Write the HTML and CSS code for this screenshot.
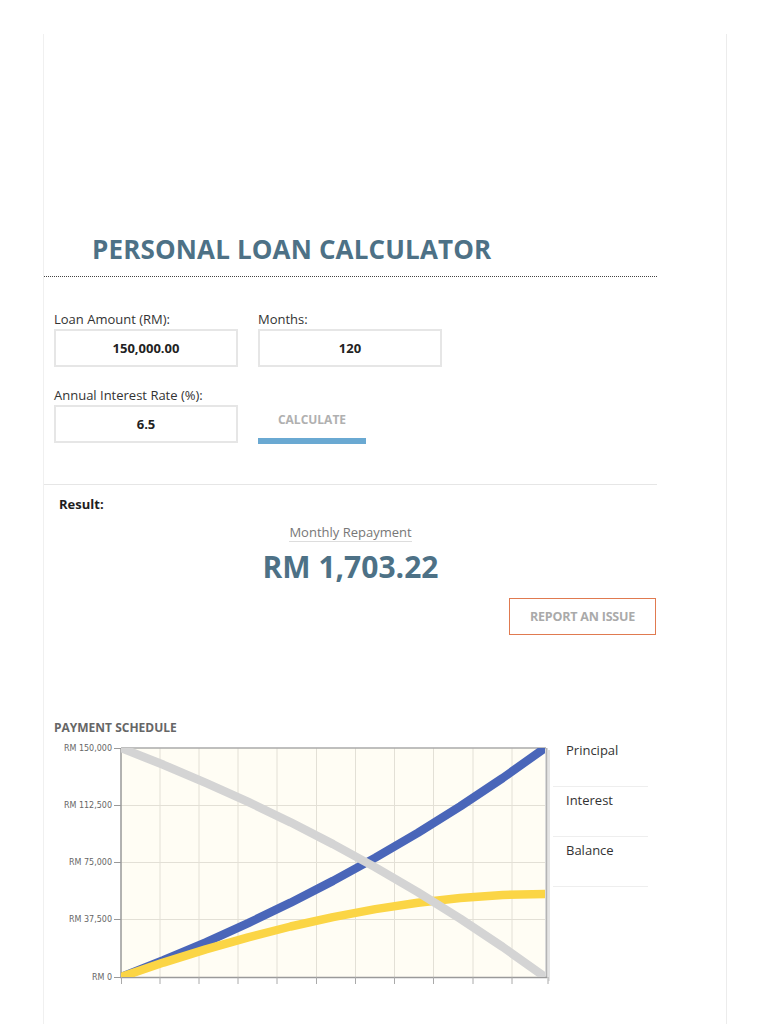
FILE: index.html
```html
<!DOCTYPE html>
<html lang="en">
<head>
<meta charset="utf-8">
<title>Personal Loan Calculator</title>
<link rel="stylesheet" href="styles.css">
</head>
<body>
<div class="page">
  <div class="main">
    <h1 class="title">PERSONAL LOAN CALCULATOR</h1>

    <form class="form">
      <div class="field">
        <label class="label">Loan Amount (RM):</label>
        <input class="input" type="text" value="150,000.00">
      </div>
      <div class="field">
        <label class="label">Months:</label>
        <input class="input" type="text" value="120">
      </div>
      <div class="field">
        <label class="label">Annual Interest Rate (%):</label>
        <input class="input" type="text" value="6.5">
      </div>
      <div class="field field-btn">
        <button class="calc" type="button">CALCULATE</button>
      </div>
    </form>

    <section class="result">
      <div class="result-label">Result:</div>
      <div class="repay">
        <span class="repay-caption">Monthly Repayment</span>
        <div class="repay-amount">RM 1,703.22</div>
      </div>
      <div class="report-row">
        <button class="report" type="button">REPORT AN ISSUE</button>
      </div>
    </section>

    <section class="schedule">
      <h2 class="schedule-title">PAYMENT SCHEDULE</h2>
      <div class="chart-row">
        <svg class="chart" width="499" height="250" viewBox="0 0 499 250">
          <defs>
            <clipPath id="plot">
              <rect x="67" y="7" width="424" height="229"/>
            </clipPath>
          </defs>
          <rect x="67" y="7" width="424" height="229" fill="#fffdf4"/>
          <g stroke="#e3e0d6" stroke-width="1">
            <line x1="106" y1="7" x2="106" y2="236"/>
            <line x1="145" y1="7" x2="145" y2="236"/>
            <line x1="184" y1="7" x2="184" y2="236"/>
            <line x1="223" y1="7" x2="223" y2="236"/>
            <line x1="262.5" y1="7" x2="262.5" y2="236"/>
            <line x1="301.5" y1="7" x2="301.5" y2="236"/>
            <line x1="340.5" y1="7" x2="340.5" y2="236"/>
            <line x1="379.5" y1="7" x2="379.5" y2="236"/>
            <line x1="419" y1="7" x2="419" y2="236"/>
            <line x1="458" y1="7" x2="458" y2="236"/>
            <line x1="67" y1="64.5" x2="491" y2="64.5"/>
            <line x1="67" y1="121.5" x2="491" y2="121.5"/>
            <line x1="67" y1="178.5" x2="491" y2="178.5"/>
          </g>
          <line x1="67" y1="7" x2="492" y2="7" stroke="#aaaaaa" stroke-width="1.5"/>
          <line x1="492.5" y1="7" x2="492.5" y2="237" stroke="#b4b4b4" stroke-width="2"/>
          <line x1="495" y1="9" x2="495" y2="240" stroke="#e4e4e4" stroke-width="2"/>
          <line x1="67" y1="7" x2="67" y2="237" stroke="#999999" stroke-width="1.5"/>
          <line x1="66" y1="236.5" x2="493" y2="236.5" stroke="#9a9a9a" stroke-width="1.5"/>
          <g stroke="#999999" stroke-width="1">
            <line x1="60" y1="7.5" x2="67" y2="7.5"/>
            <line x1="60" y1="64.5" x2="67" y2="64.5"/>
            <line x1="60" y1="121.5" x2="67" y2="121.5"/>
            <line x1="60" y1="178.5" x2="67" y2="178.5"/>
            <line x1="60" y1="236.5" x2="67" y2="236.5"/>
          </g>
          <g stroke="#aaaaaa" stroke-width="1">
            <line x1="67.5" y1="236" x2="67.5" y2="243"/>
            <line x1="106" y1="236" x2="106" y2="243"/>
            <line x1="145" y1="236" x2="145" y2="243"/>
            <line x1="184" y1="236" x2="184" y2="243"/>
            <line x1="223" y1="236" x2="223" y2="243"/>
            <line x1="262.5" y1="236" x2="262.5" y2="243"/>
            <line x1="301.5" y1="236" x2="301.5" y2="243"/>
            <line x1="340.5" y1="236" x2="340.5" y2="243"/>
            <line x1="379.5" y1="236" x2="379.5" y2="243"/>
            <line x1="419" y1="236" x2="419" y2="243"/>
            <line x1="458" y1="236" x2="458" y2="243"/>
            <line x1="494" y1="236" x2="494" y2="243"/>
          </g>
          <g class="axis-label" text-anchor="end">
            <text x="58" y="9.5">RM 150,000</text>
            <text x="58" y="66.5">RM 112,500</text>
            <text x="58" y="123.5">RM 75,000</text>
            <text x="58" y="180.5">RM 37,500</text>
            <text x="58" y="238.5">RM 0</text>
          </g>
          <g clip-path="url(#plot)" fill="none" stroke-width="8.5" stroke-linejoin="round" stroke-linecap="round">
            <polyline stroke="#4a66b9" points="67,236 109.4,219.2 151.8,201.3 194.2,182.1 236.6,161.7 279,139.9 321.4,116.6 363.8,91.8 406.2,65.4 448.6,37.1 491,7"/>
            <polyline stroke="#fbd545" points="67,236 109.4,221.6 151.8,208.4 194.2,196.3 236.6,185.5 279,176.1 321.4,168.1 363.8,161.7 406.2,157 448.6,154 491,153"/>
            <polyline stroke="#d4d4d4" points="67,7 109.4,23.8 151.8,41.8 194.2,60.9 236.6,81.3 279,103.1 321.4,126.4 363.8,151.2 406.2,177.6 448.6,205.9 491,236"/>
          </g>
        </svg>
        <ul class="legend">
          <li class="legend-item">Principal</li>
          <li class="legend-item">Interest</li>
          <li class="legend-item">Balance</li>
        </ul>
      </div>
    </section>
  </div>
</div>
</body>
</html>
```

FILE: styles.css
```css
* {
  box-sizing: border-box;
}

html, body {
  margin: 0;
  padding: 0;
  background: #ffffff;
}

body {
  font-family: "Open Sans", "Noto Sans", sans-serif;
  color: #333333;
  font-size: 13px;
}

.page {
  display: flow-root;
  margin: 34px 0 0 43px;
  width: 684px;
  min-height: 990px;
  border-left: 1px solid #f0f0f0;
  border-right: 1px solid #ececec;
}

.main {
  width: 613px;
  padding-top: 197px;
}

.title {
  margin: 0;
  padding: 0 0 9px 48px;
  font-size: 26px;
  line-height: 36px;
  font-weight: 700;
  color: #4d7186;
  border-bottom: 1px dotted #444444;
  letter-spacing: 0.15px;
}

.form {
  display: grid;
  grid-template-columns: 184px 184px;
  column-gap: 20px;
  row-gap: 19px;
  padding: 33px 0 41px 10px;
  border-bottom: 1px solid #e6e6e6;
  margin: 0;
}

.field {
  display: flex;
  flex-direction: column;
}

.label {
  font-size: 13px;
  line-height: 18px;
  color: #333333;
  margin-bottom: 1px;
}

.input {
  width: 184px;
  height: 38px;
  border: 2px solid #e6e6e6;
  background: #ffffff;
  text-align: center;
  font-family: "Open Sans", "Noto Sans", sans-serif;
  font-size: 13px;
  font-weight: 700;
  color: #222222;
  padding: 0;
  margin: 0;
  outline: none;
}

.field-btn {
  justify-content: flex-end;
}

.calc {
  -webkit-appearance: none;
  appearance: none;
  width: 108px;
  height: 38px;
  padding: 5px 0 0 0;
  margin: 0 0 -1px 0;
  border: none;
  border-bottom: 6px solid #6aa9d2;
  background: transparent;
  font-family: "Open Sans", "Noto Sans", sans-serif;
  font-size: 12px;
  font-weight: 700;
  color: #b0b0b0;
  line-height: 18px;
  text-align: center;
  align-self: flex-start;
  display: flex;
  align-items: flex-start;
  justify-content: center;
}

.result {
  padding: 10px 0 0 0;
}

.result-label {
  padding-left: 15px;
  font-size: 13px;
  line-height: 18px;
  font-weight: 700;
  color: #1e1e1e;
}

.repay {
  margin-top: 11px;
  display: flex;
  flex-direction: column;
  align-items: center;
}

.repay-caption {
  display: inline-block;
  font-size: 13px;
  line-height: 17px;
  color: #777777;
  border-bottom: 1px solid #dddddd;
}

.repay-amount {
  margin-top: 5px;
  font-size: 30px;
  line-height: 40px;
  font-weight: 700;
  color: #4d7186;
}

.report-row {
  display: flex;
  justify-content: flex-end;
  margin-top: 11px;
  padding-right: 1px;
}

.report {
  -webkit-appearance: none;
  appearance: none;
  width: 147px;
  height: 37px;
  border: 1px solid #e07a50;
  border-radius: 0;
  background: #ffffff;
  font-family: "Open Sans", "Noto Sans", sans-serif;
  font-size: 12.5px;
  font-weight: 700;
  color: #aaaaaa;
  padding: 0;
  letter-spacing: -0.2px;
}

.schedule {
  margin-top: 84px;
  padding-left: 10px;
}

.schedule-title {
  margin: 0;
  font-size: 12px;
  line-height: 18px;
  font-weight: 700;
  color: #666666;
}

.chart-row {
  display: flex;
  align-items: flex-start;
  margin-top: 1px;
}

.chart {
  display: block;
  margin-top: 3px;
  flex: none;
}

.axis-label {
  font-family: "DejaVu Sans", sans-serif;
  font-size: 8px;
  fill: #666666;
}

.legend {
  list-style: none;
  margin: -1px 0 0 0;
  padding: 0;
  width: 95px;
}

.legend-item {
  height: 50px;
  padding: 4px 0 0 13px;
  font-size: 13px;
  line-height: 18px;
  color: #333333;
  border-bottom: 1px solid #eeeeee;
}
```
